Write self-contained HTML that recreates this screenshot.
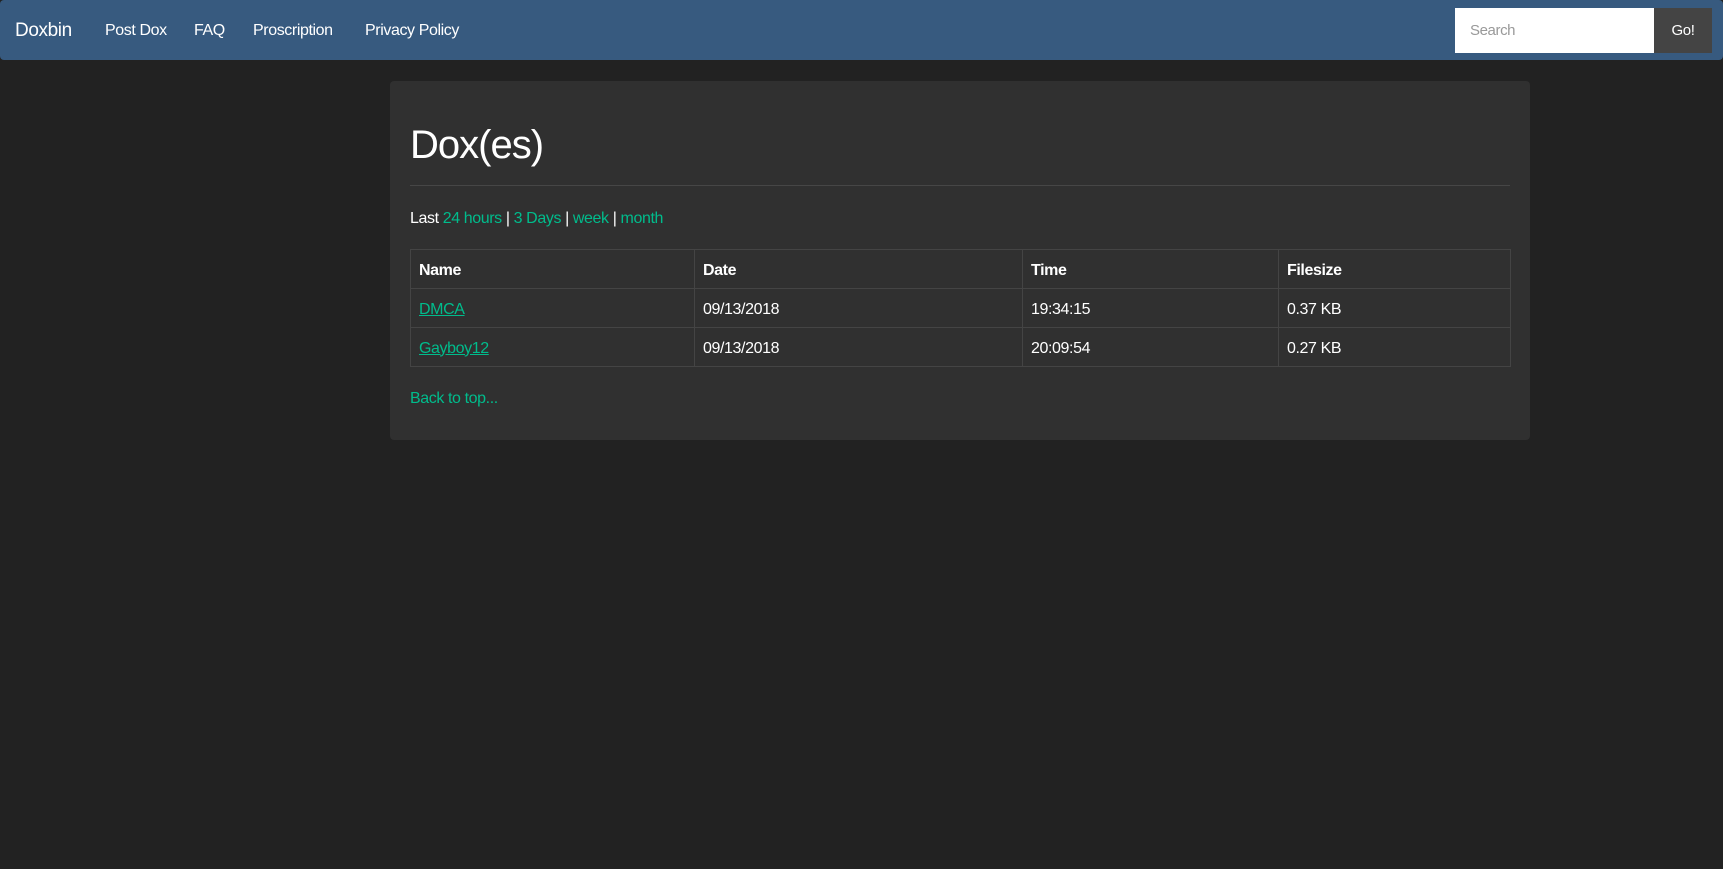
<!DOCTYPE html>
<html><head><style>
*{box-sizing:border-box;margin:0;padding:0}
body{background:#222;width:1723px;height:869px;font-family:"Liberation Sans",sans-serif;color:#fff;font-size:16px;position:relative;overflow:hidden;letter-spacing:-0.4px}
nav{position:absolute;left:0;top:0;width:1723px;height:60px;background:#375a7f;border-radius:4px}
nav a{position:absolute;color:#fff;text-decoration:none;top:22px;font-size:16px}
.brand{font-size:19px;top:20px;left:15px}
.search{position:absolute;left:1455px;top:8px;width:199px;height:45px;background:#fff;color:#999;padding:14px 15px;font-size:15px}
.go{position:absolute;left:1654px;top:8px;width:58px;height:45px;background:#444;color:#fff;text-align:center;padding-top:14px;font-size:15px}
.panel{position:absolute;left:390px;top:81px;width:1140px;height:359px;background:#303030;border-radius:4px}
h1{position:absolute;left:20px;top:42px;font-size:40px;font-weight:normal;letter-spacing:-1px}
hr{position:absolute;left:20px;top:104px;width:1100px;border:0;border-top:1px solid #464646}
.g{color:#00bc8c;text-decoration:none}
.last{position:absolute;left:20px;top:129px;font-size:16px}
table{position:absolute;left:20px;top:168px;width:1101px;border-collapse:collapse}
td,th{border:1px solid #444;height:39px;padding:3px 8px 0;text-align:left;font-size:16px}
td a{color:#00bc8c;text-decoration:underline}
.back{position:absolute;left:20px;top:309px}
</style></head><body>
<nav><a class="brand">Doxbin</a><a style="left:105px">Post Dox</a><a style="left:194px">FAQ</a><a style="left:253px">Proscription</a><a style="left:365px">Privacy Policy</a>
<div class="search">Search</div><div class="go">Go!</div></nav>
<div class="panel">
<h1>Dox(es)</h1><hr>
<div class="last">Last <a class="g">24 hours</a> | <a class="g">3 Days</a> | <a class="g">week</a> | <a class="g">month</a></div>
<table>
<tr><th style="width:284px">Name</th><th style="width:328px">Date</th><th style="width:256px">Time</th><th>Filesize</th></tr>
<tr><td><a>DMCA</a></td><td>09/13/2018</td><td>19:34:15</td><td>0.37 KB</td></tr>
<tr><td><a>Gayboy12</a></td><td>09/13/2018</td><td>20:09:54</td><td>0.27 KB</td></tr>
</table>
<a class="g back">Back to top...</a>
</div>
</body></html>
